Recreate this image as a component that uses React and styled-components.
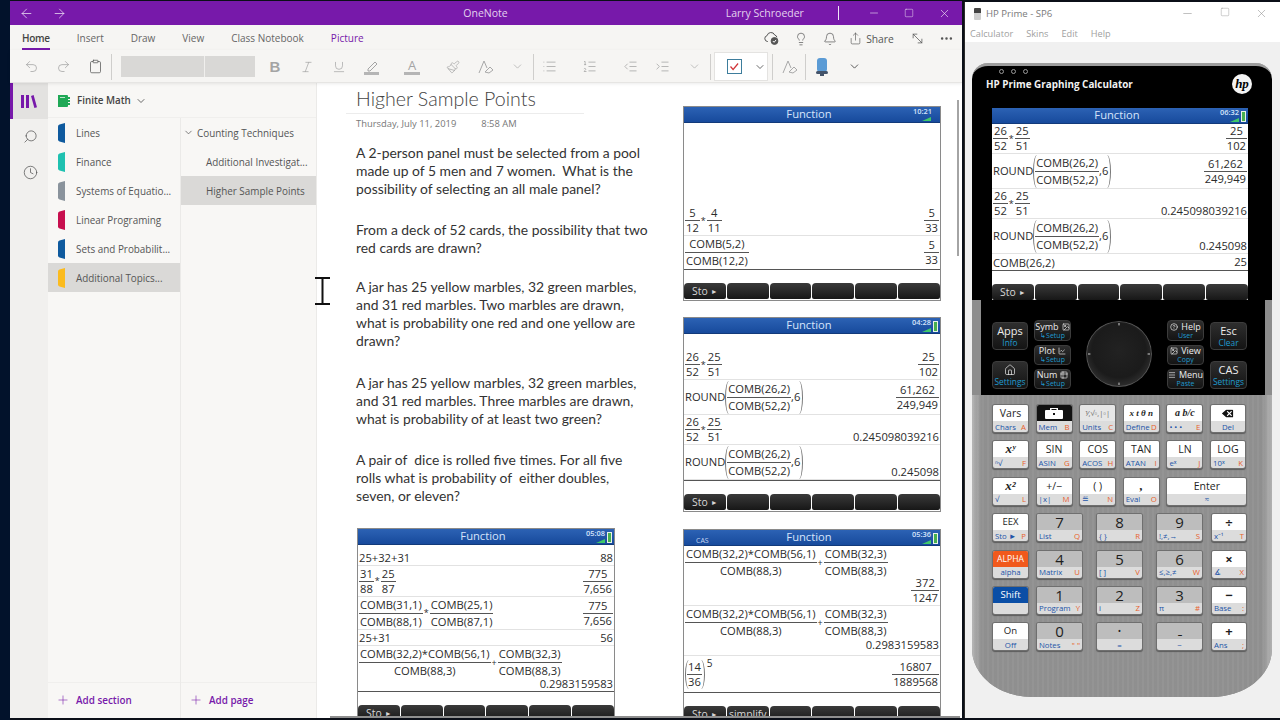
import styled, { createGlobalStyle } from 'styled-components'
import {
  ArrowLeft, ArrowRight, Undo2, Redo2, Clipboard, Italic, Underline, Paintbrush, ChevronDown,
  List, ListOrdered, IndentDecrease, IndentIncrease, Search, Clock, Lightbulb, Bell, Share,
  MoveDiagonal2, Ellipsis, Minus, Square, X, Plus, Home, ChartLine, Table2, CircleHelp, Menu, Image,
  Delete,
} from 'lucide-react'

const UI_FONT = '"Open Sans", "Noto Sans", sans-serif'
const NOTE_FONT = 'Lato, "Open Sans", sans-serif'
const PURPLE = '#7719AA'

const GlobalStyle = createGlobalStyle`
  * { box-sizing: border-box; margin: 0; padding: 0; }
  html, body { width: 100%; height: 100%; overflow: hidden; background: #02122b; }
  body { font-family: ${UI_FONT}; }
  #root { width: 1280px; height: 720px; }
`

const Desktop = styled.div`
  width: 1280px;
  height: 720px;
  padding: 1px 0 2px 10px;
  display: flex;
  background: linear-gradient(to right, #02122b 10px, #0b0f18 10px);
  position: relative;
  overflow: hidden;
`

/* ---------- OneNote window ---------- */

const NoteWindow = styled.div`
  width: 952px;
  display: flex;
  flex-direction: column;
  background: #fff;
`

const TitleBar = styled.div`
  height: 24px;
  flex: none;
  background: ${PURPLE};
  color: #e4d2ee;
  display: flex;
  align-items: center;
  font-size: 10.5px;
  position: relative;
`

const NavSlot = styled.div`
  width: 35px;
  display: flex;
  justify-content: center;
  color: #efe4f5;
`

const TitleName = styled.span`
  margin-left: ${(p) => p.$ml}px;
  white-space: nowrap;
`

const TitleDivider = styled.span`
  width: 1px;
  height: 14px;
  background: #f0e6f6;
  margin: 0 18px 0 34px;
`

const WinBtn = styled.div`
  width: 37px;
  display: flex;
  justify-content: center;
  color: #efe4f5;
`

const TabRow = styled.div`
  height: 25px;
  flex: none;
  background: #f6f5f3;
  display: flex;
  align-items: stretch;
  padding-left: 12px;
  gap: 27px;
  font-size: 10px;
  color: #666;
  position: relative;
`

const Tab = styled.div`
  display: flex;
  align-items: center;
  height: 25px;
  padding-top: 2px;
  color: ${(p) => (p.$purple ? PURPLE : p.$active ? '#444' : '#666')};
  font-weight: ${(p) => (p.$active ? 600 : 400)};
  letter-spacing: ${(p) => (p.$active ? '-0.3px' : '0')};
  border-bottom: 2px solid ${(p) => (p.$active ? PURPLE : 'transparent')};
`

const TabTools = styled.div`
  margin-left: auto;
  padding-top: 2px;
  display: flex;
  align-items: center;
  color: #555;
  font-size: 10.3px;
`

const TabTool = styled.div`
  width: ${(p) => p.$w}px;
  display: flex;
  align-items: center;
  justify-content: center;
  gap: 4px;
`

const Ribbon = styled.div`
  height: 33px;
  flex: none;
  background: #f6f5f3;
  border-bottom: 1px solid #e6e5e3;
  box-shadow: 0 1px 3px rgba(0, 0, 0, 0.08);
  display: flex;
  align-items: center;
  padding: 1px 0 0 5px;
  color: #a2a2a2;
  position: relative;
  z-index: 1;
`

const Slot = styled.div`
  width: ${(p) => p.$w || 32}px;
  flex: none;
  display: flex;
  align-items: center;
  justify-content: center;
  color: ${(p) => p.$color || 'inherit'};
`

const RibbonSep = styled.span`
  width: 1px;
  height: 26px;
  flex: none;
  background: #cfcecc;
`

const FontBox = styled.div`
  width: 134px;
  height: 21px;
  margin: 0 4px 0 9px;
  flex: none;
  background: linear-gradient(to right, #d9d8d6 83px, #f0efed 83px, #f0efed 84px, #d9d8d6 84px);
`

const CheckCell = styled.div`
  width: 54px;
  height: 29px;
  margin: 0 4px 0 3px;
  flex: none;
  background: #fff;
  border: 1px solid #e4e3e1;
  display: flex;
  align-items: center;
  color: #444;
`

const BarGlyph = styled.div`
  display: flex;
  flex-direction: column;
  align-items: center;
  font-size: 13px;
  line-height: 12px;
  color: #a4a4a4;
  &::after {
    content: '';
    width: 16px;
    height: 3px;
    margin-top: 1px;
    background: #b5b5b5;
  }
`

const BoldGlyph = styled.span`
  font: 700 15px "Liberation Sans", sans-serif;
  color: #a4a4a4;
`

const NoteBody = styled.div`
  flex: 1;
  min-height: 0;
  display: flex;
`

const Rail = styled.div`
  width: 38px;
  flex: none;
  background: #f1f0ee;
  color: #555;
  display: flex;
  flex-direction: column;
`

const RailItem = styled.div`
  height: ${(p) => p.$h}px;
  display: flex;
  align-items: center;
  justify-content: center;
  background: ${(p) => (p.$active ? '#e3e2e0' : 'transparent')};
  border-left: 3px solid ${(p) => (p.$active ? PURPLE : 'transparent')};
  padding-right: ${(p) => (p.$active ? 3 : 0)}px;
`

const MirrorSearch = styled(Search)`
  transform: scaleX(-1);
`

const NavPanel = styled.div`
  width: 269px;
  flex: none;
  display: flex;
  flex-direction: column;
  background: #f8f7f5;
  border-right: 1px solid #ebeae8;
`

const NotebookHead = styled.div`
  height: 35px;
  flex: none;
  display: flex;
  align-items: center;
  padding: 1px 0 0 9px;
  gap: 7px;
  font-size: 9.8px;
  font-weight: 600;
  color: #444;
  border-bottom: 1px solid #f0efed;
`

const HeadText = styled.span`
  margin-right: -3px;
`

const NavColumns = styled.div`
  flex: 1;
  min-height: 0;
  display: flex;
`

const NavCol = styled.div`
  width: ${(p) => p.$w}px;
  display: flex;
  flex-direction: column;
  border-right: ${(p) => (p.$divider ? '1px solid #ebeae8' : 'none')};
`

const NavItem = styled.div`
  height: 29px;
  flex: none;
  display: flex;
  align-items: center;
  padding-left: ${(p) => p.$pl}px;
  gap: ${(p) => p.$gap || 0}px;
  font-size: 9.9px;
  color: #555;
  white-space: nowrap;
  background: ${(p) => (p.$selected ? '#dad9d7' : 'transparent')};
`

const AddRow = styled.div`
  margin-top: auto;
  height: 36px;
  flex: none;
  display: flex;
  align-items: center;
  padding: 0 0 2px 8px;
  gap: 6px;
  font-size: 9.9px;
  font-weight: 600;
  color: ${PURPLE};
  border-top: 1px solid #f0efed;
`

const Page = styled.div`
  flex: 1;
  min-width: 0;
  padding-left: 39px;
  display: flex;
  background: #fff;
  overflow: hidden;
  position: relative;
`

const TextCol = styled.div`
  width: 327px;
  flex: none;
`

const NoteTitle = styled.div`
  width: 238px;
  height: 27px;
  margin: 4px 0 0 -10px;
  padding-left: 10px;
  border-bottom: 1px solid #ececec;
  font: 300 19.6px/24px ${NOTE_FONT};
  color: #444;
  white-space: nowrap;
`

const DateLine = styled.div`
  height: 14px;
  margin-top: 2px;
  font-size: 9.4px;
  line-height: 15px;
  color: #777;
  display: flex;
  gap: 25px;
`

const Para = styled.p`
  margin-top: ${(p) => p.$mt}px;
  font: 400 13.9px/18px ${NOTE_FONT};
  color: #333;
  white-space: pre;
`

const ShotLeft = styled.div`
  margin: 23px 0 0 1px;
`

const ShotCol = styled.div`
  padding-top: 23px;
  display: flex;
  flex-direction: column;
  gap: 16px;
  & > :last-child {
    margin-top: 1px;
  }
`

const ScrollV = styled.div`
  position: absolute;
  right: 3px;
  top: 17px;
  width: 2px;
  height: 156px;
  background: #a4a4a4;
`

const ScrollH = styled.div`
  position: absolute;
  left: 13px;
  right: 2px;
  bottom: 0;
  height: 2px;
  background: #8f8f8f;
`

const Caret = styled.svg`
  position: absolute;
  left: 315px;
  top: 277px;
`

/* ---------- HP Prime screen, used in the notes and in the emulator ---------- */

const Screen = styled.div`
  width: ${(p) => p.$w}px;
  height: ${(p) => p.$h}px;
  flex: none;
  display: flex;
  flex-direction: column;
  background: #fff;
  border: ${(p) => (p.$bare ? 'none' : '1px solid #8a8a8a')};
  color: #2c2c2c;
  font-family: "Open Sans", sans-serif;
  font-size: 11.2px;
  overflow: hidden;
`

const ScreenHead = styled.div`
  height: 16px;
  flex: none;
  padding-right: 6px;
  background: linear-gradient(#2c62b4, #174a9c);
  border-bottom: 1px solid #123a7a;
  color: #d6e4fb;
  font-size: 11.2px;
  line-height: 14px;
  text-align: center;
  position: relative;
`

const CasTag = styled.span`
  position: absolute;
  left: 12px;
  bottom: 0;
  font-size: 7px;
  line-height: 9px;
  color: #c6d6f2;
`

const ClockText = styled.span`
  position: absolute;
  right: ${(p) => (p.$batt ? 9 : 8)}px;
  top: 0;
  font-size: 7.4px;
  line-height: 8px;
  color: #d6e4fb;
  font-weight: 600;
`

const Signal = styled.span`
  position: absolute;
  right: 9px;
  bottom: 1px;
  width: 9px;
  height: 4px;
  background: #3fc86a;
  clip-path: polygon(0 100%, 100% 0, 100% 100%);
`

const Battery = styled.span`
  position: absolute;
  right: 2px;
  top: 3px;
  width: 5px;
  height: 11px;
  border: 1px solid #e8f2e8;
  background: #47b04f;
`

const ScreenRows = styled.div`
  flex: 1;
  min-height: 0;
  display: flex;
  flex-direction: column;
  justify-content: flex-end;
  border-bottom: 1px solid #555;
`

const Row = styled.div`
  height: ${(p) => p.$h}px;
  flex: none;
  padding: 0 1px;
  display: flex;
  justify-content: space-between;
  align-items: ${(p) => p.$align || 'center'};
  border-bottom: ${(p) => (p.$last ? 'none' : '1px solid #e2e2e2')};
  white-space: nowrap;
`

const LeftCell = styled.div`
  flex: 1 1 0;
  min-width: 0;
  display: flex;
`

const RightCell = styled.div`
  flex: none;
  line-height: 14px;
  align-self: ${(p) => p.$self || 'auto'};
  margin-bottom: ${(p) => p.$mb || 0}px;
`

const Expr = styled.div`
  display: inline-flex;
  align-items: center;
  line-height: 14px;
`

const FracBox = styled.div`
  display: inline-flex;
  flex-direction: column;
  align-items: center;
  text-align: center;
  line-height: ${(p) => (p.$tall ? 16 : 14)}px;
`

const FracTop = styled.span`
  padding: 0 1px;
  width: 100%;
  border-bottom: 1px solid #555;
`

const FracBot = styled.span`
  padding: 0 1px;
`

const Times = styled.span`
  margin: 0 1px;
  font-size: 9px;
`

const Sup = styled.span`
  align-self: flex-start;
  margin: -4px 0 0 2px;
  font-size: 10px;
`

const Parens = styled.div`
  display: inline-flex;
  align-items: center;
  padding: 0 2px 0 1px;
  border-left: 1px solid #777;
  border-right: 1px solid #777;
  border-radius: 4px / 50%;
`

const SoftKeys = styled.div`
  height: 16px;
  flex: none;
  margin: 13px 0 1px;
  display: grid;
  grid-template-columns: repeat(6, 1fr);
  gap: 1px;
  background: #fff;
`

const SoftKey = styled.div`
  background: linear-gradient(#3a3a3a, #171717);
  border-radius: 4px 4px 2px 2px;
  color: #d7d7d7;
  font-size: 10.4px;
  line-height: 16px;
  text-align: center;
  overflow: hidden;
`

const SoftArrow = styled.span`
  font-size: 7px;
  margin-left: 3px;
  vertical-align: 1px;
`

const Frac = ({ n, d, tall }) => (
  <FracBox $tall={tall}>
    <FracTop>{n}</FracTop>
    <FracBot>{d}</FracBot>
  </FracBox>
)

const frac2652 = (
  <Expr>
    <Frac n="26" d="52" />
    <Times>*</Times>
    <Frac n="25" d="51" />
  </Expr>
)

const round = (
  <Expr>
    ROUND
    <Parens>
      <Frac tall n="COMB(26,2)" d="COMB(52,2)" />
      ,6
    </Parens>
  </Expr>
)

const sumComb = (
  <Expr>
    <Frac tall n="COMB(32,2)*COMB(56,1)" d="COMB(88,3)" />
    <Times>+</Times>
    <Frac tall n="COMB(32,3)" d="COMB(88,3)" />
  </Expr>
)

const roundRows = [
  { h: 30, left: frac2652, right: <Frac n="25" d="102" /> },
  { h: 35, left: round, right: <Frac n="61,262" d="249,949" /> },
  { h: 30, left: frac2652, right: '0.245098039216', self: 'flex-end' },
  { h: 35, left: round, right: '0.245098', self: 'flex-end' },
]

const SHOTS = {
  first: {
    time: '10:21',
    rows: [
      {
        h: 30,
        left: (
          <Expr>
            <Frac n="5" d="12" />
            <Times>*</Times>
            <Frac n="4" d="11" />
          </Expr>
        ),
        right: <Frac n="5" d="33" />,
      },
      { h: 33, left: <Frac tall n="COMB(5,2)" d="COMB(12,2)" />, right: <Frac n="5" d="33" />, last: true },
    ],
  },
  second: { time: '04:28', batt: true, rows: roundRows },
  third: {
    time: '05:08',
    batt: true,
    rows: [
      { h: 21, align: 'flex-end', left: '25+32+31', right: '88' },
      {
        h: 31,
        left: (
          <Expr>
            <Frac n="31" d="88" />
            <Times>*</Times>
            <Frac n="25" d="87" />
          </Expr>
        ),
        right: <Frac n="775" d="7,656" />,
      },
      {
        h: 33,
        left: (
          <Expr>
            <Frac tall n="COMB(31,1)" d="COMB(88,1)" />
            <Times>*</Times>
            <Frac tall n="COMB(25,1)" d="COMB(87,1)" />
          </Expr>
        ),
        right: <Frac n="775" d="7,656" />,
      },
      { h: 16, align: 'flex-end', left: '25+31', right: '56' },
      { h: 45, align: 'flex-start', left: sumComb, right: '0.2983159583', self: 'flex-end', last: true },
    ],
  },
  fourth: {
    time: '05:36',
    batt: true,
    cas: true,
    keys: ['Sto', 'simplify'],
    rows: [
      { h: 60, align: 'flex-start', left: sumComb, right: <Frac n="372" d="1247" />, self: 'flex-end' },
      { h: 50, align: 'flex-start', left: sumComb, right: '0.2983159583', self: 'flex-end', mb: 3 },
      {
        h: 36,
        left: (
          <Expr>
            <Parens>
              <Frac n="14" d="36" />
            </Parens>
            <Sup>5</Sup>
          </Expr>
        ),
        right: <Frac n="16807" d="1889568" />,
        last: true,
      },
    ],
  },
  emulator: {
    time: '06:32',
    batt: true,
    rows: [...roundRows, { h: 16, left: 'COMB(26,2)', right: '25', last: true }],
  },
}

function PrimeScreen({ shot, w = 258, h = 195, bare }) {
  const keys = shot.keys || ['Sto']
  return (
    <Screen $w={w} $h={h} $bare={bare}>
      <ScreenHead>
        {shot.cas && <CasTag>CAS</CasTag>}
        Function
        <ClockText $batt={shot.batt}>{shot.time}</ClockText>
        <Signal />
        {shot.batt && <Battery />}
      </ScreenHead>
      <ScreenRows>
        {shot.rows.map((r, i) => (
          <Row key={i} $h={r.h} $align={r.align} $last={r.last}>
            <LeftCell>{r.left}</LeftCell>
            <RightCell $self={r.self} $mb={r.mb}>{r.right}</RightCell>
          </Row>
        ))}
      </ScreenRows>
      <SoftKeys>
        {[0, 1, 2, 3, 4, 5].map((i) => (
          <SoftKey key={i}>
            {keys[i]}
            {keys[i] === 'Sto' && <SoftArrow>►</SoftArrow>}
          </SoftKey>
        ))}
      </SoftKeys>
    </Screen>
  )
}

/* ---------- HP Prime emulator window ---------- */

const CalcWindow = styled.div`
  width: 316px;
  margin-left: 2px;
  margin-top: 1px;
  flex: none;
  display: flex;
  flex-direction: column;
  background: #f0f0f0;
  border-left: 1px solid #2b2b2b;
`

const CalcTitle = styled.div`
  height: 23px;
  flex: none;
  background: #fff;
  display: flex;
  align-items: center;
  padding-left: 9px;
  gap: 5px;
  font-size: 9.6px;
  color: #7a7a7a;
`

const AppGlyph = styled.span`
  width: 7px;
  height: 12px;
  border-radius: 1px;
  background: linear-gradient(#444 45%, #cfcfcf 45%);
`

const CalcControls = styled.div`
  margin-left: auto;
  display: flex;
  color: #8c8c8c;
`

const CalcCtl = styled.div`
  width: 37px;
  display: flex;
  justify-content: center;
`

const CalcMenu = styled.div`
  height: 17px;
  flex: none;
  background: #fff;
  display: flex;
  align-items: center;
  padding-left: 5px;
  gap: 13px;
  font-size: 9.2px;
  color: #a0a0a0;
`

const Shell = styled.div`
  width: 300px;
  margin: 21px 0 0 7px;
  height: 634px;
  flex: none;
  display: flex;
  flex-direction: column;
  border-radius: 16px 16px 60px 60px / 16px 16px 48px 48px;
  overflow: hidden;
  background: #8d8d8d;
  box-shadow: inset 0 2px 0 #b9b9b9;
`

const ShellTop = styled.div`
  height: 237px;
  flex: none;
  padding: 0 20px;
  background: #000;
  border-radius: 16px 16px 0 0;
  border-top: 3px solid #9d9d9d;
  display: flex;
  flex-direction: column;
`

const BrandRow = styled.div`
  height: 42px;
  flex: none;
  display: flex;
  align-items: flex-start;
  justify-content: space-between;
  padding-top: 3px;
`

const BrandText = styled.div`
  display: flex;
  flex-direction: column;
  gap: 3px;
  margin-left: -6px;
  color: #f2f2f2;
  font-size: 9.9px;
  font-weight: 700;
`

const Dots = styled.div`
  display: flex;
  gap: 7px;
  margin-left: 13px;
`

const Dot = styled.span`
  width: 5px;
  height: 5px;
  border-radius: 50%;
  border: 1px solid #999;
`

const HpBadge = styled.div`
  width: 20px;
  height: 20px;
  margin: 5px 0 0 0;
  border-radius: 50%;
  background: #f4f4f4;
  color: #000;
  font: italic 700 13px/19px "Liberation Serif", serif;
  text-align: center;
`

const ShellMid = styled.div`
  height: 95px;
  flex: none;
  padding: 20px 18px 6px 11px;
  background: #000;
  border-left: 9px solid #8d8d8d;
  border-right: 7px solid #8d8d8d;
  display: flex;
  justify-content: space-between;
`

const KeyCluster = styled.div`
  display: flex;
  gap: 6px;
`

const KeyStack = styled.div`
  display: flex;
  flex-direction: column;
  justify-content: space-between;
  padding-top: ${(p) => p.$pt || 0}px;
  width: ${(p) => p.$w}px;
`

const DarkKey = styled.div`
  height: ${(p) => p.$h}px;
  border: 1px solid #3c3c3c;
  border-radius: 4px;
  background: linear-gradient(#2e2e2e, #141414);
  display: flex;
  flex-direction: column;
  align-items: center;
  justify-content: center;
  color: #ececec;
  font-size: ${(p) => (p.$small ? 9 : 11)}px;
  line-height: ${(p) => (p.$small ? 10 : 13)}px;
`

const DarkSub = styled.span`
  color: #1f9bd0;
  font-size: ${(p) => (p.$small ? 7 : 8.4)}px;
  line-height: ${(p) => (p.$small ? 8 : 11)}px;
`

const DarkLabel = styled.span`
  display: flex;
  align-items: center;
  gap: 3px;
`

const Dial = styled.div`
  width: 66px;
  height: 66px;
  margin-top: 1px;
  border-radius: 50%;
  background:
    radial-gradient(circle at 50% 5%, #777 0 1px, transparent 1.5px),
    radial-gradient(circle at 50% 95%, #777 0 1px, transparent 1.5px),
    radial-gradient(circle at 5% 50%, #777 0 1px, transparent 1.5px),
    radial-gradient(circle at 95% 50%, #777 0 1px, transparent 1.5px),
    radial-gradient(circle at 50% 45%, #222 0, #1b1b1b 55%, #4a4a4a 100%);
  box-shadow: inset 0 0 0 1px #555;
`

const Metal = styled.div`
  flex: 1;
  padding: 10px 20px 0 21px;
  background:
    repeating-linear-gradient(90deg, rgba(255, 255, 255, 0.02) 0 2px, rgba(0, 0, 0, 0.02) 2px 5px),
    linear-gradient(to right, #b4b4b4 0, #929292 10px, #929292 290px, #b4b4b4 100%);
`

const KeyGrid = styled.div`
  display: grid;
  grid-template-columns: ${(p) => p.$cols};
  grid-auto-rows: 27px;
  row-gap: 9.4px;
  margin-bottom: 9.4px;
`

const KeyCap = styled.div`
  width: ${(p) => p.$w}px;
  grid-column: span ${(p) => p.$span || 1};
  height: 27px;
  border-radius: 2px;
  overflow: hidden;
  display: flex;
  flex-direction: column;
  box-shadow: 0 0 0 1px #6f6f6f, 0 1px 1px 1px #5c5c5c;
  background: #dcdcdc;
`

const KeyFace = styled.div`
  height: 16px;
  flex: none;
  display: flex;
  align-items: center;
  justify-content: center;
  background: ${(p) => p.$bg || '#fff'};
  color: ${(p) => p.$fg || '#1e1e1e'};
  font-size: ${(p) => p.$size || 10.5}px;
  line-height: 16px;
  font-family: ${(p) => (p.$serif ? '"Liberation Serif", serif' : 'inherit')};
  font-style: ${(p) => (p.$serif ? 'italic' : 'normal')};
  font-weight: ${(p) => (p.$serif || p.$strong ? 700 : 400)};
  white-space: nowrap;
`

const KeyFoot = styled.div`
  flex: 1;
  min-height: 0;
  padding: 0 2px;
  display: flex;
  align-items: center;
  justify-content: ${(p) => (p.$center ? 'center' : 'space-between')};
  color: #2254a8;
  font-size: 7.8px;
  line-height: 10px;
  font-weight: 500;
  white-space: nowrap;
`

const Orange = styled.span`
  color: #e8622c;
`

const GRAY = { bg: '#bdbdbd', size: 15 }
const SMALL_OPS = { size: 13, strong: true }

const upperKeys = [
  { id: 'vars', label: 'Vars', blue: 'Chars', orange: 'A', w: 35 },
  { id: 'mem', tool: true, blue: 'Mem', orange: 'B', w: 35, bg: '#111' },
  { id: 'units', label: '⅟,√▫,|▫|', blue: 'Units', orange: 'C', w: 35, size: 7.5, bg: '#e6e6e6', fg: '#666' },
  { id: 'xt', label: 'x t θ n', blue: 'Define', orange: 'D', w: 35, serif: true, size: 9 },
  { id: 'abc', label: 'a b/c', blue: '• • •', orange: 'E', w: 35, serif: true, size: 10 },
  { id: 'del', del: true, blue: 'Del', center: true, w: 34 },
  { id: 'pow', label: 'xʸ', blue: 'ⁿ√', orange: 'F', w: 35, serif: true, size: 13 },
  { id: 'sin', label: 'SIN', blue: 'ASIN', orange: 'G', w: 35 },
  { id: 'cos', label: 'COS', blue: 'ACOS', orange: 'H', w: 35 },
  { id: 'tan', label: 'TAN', blue: 'ATAN', orange: 'I', w: 35 },
  { id: 'ln', label: 'LN', blue: 'eˣ', orange: 'J', w: 35 },
  { id: 'log', label: 'LOG', blue: '10ˣ', orange: 'K', w: 34 },
  { id: 'sq', label: 'x²', blue: '√', orange: 'L', w: 35, serif: true, size: 13 },
  { id: 'neg', label: '+/−', blue: '|x|', orange: 'M', w: 35 },
  { id: 'par', label: '( )', blue: '≝', orange: 'N', w: 35 },
  { id: 'com', label: ',', blue: 'Eval', orange: 'O', w: 35, size: 13, serif: true },
  { id: 'ent', label: 'Enter', blue: '≈', center: true, w: 79, span: 2 },
]

const lowerKeys = [
  { id: 'eex', label: 'EEX', blue: 'Sto ►', orange: 'P', w: 35, size: 9.5 },
  { ...GRAY, id: '7', label: '7', blue: 'List', orange: 'Q', w: 45 },
  { ...GRAY, id: '8', label: '8', blue: '{ }', orange: 'R', w: 45 },
  { ...GRAY, id: '9', label: '9', blue: '!,≠,→', orange: 'S', w: 45 },
  { ...SMALL_OPS, id: 'div', label: '÷', blue: 'x⁻¹', orange: 'T', w: 34 },
  { id: 'alpha', label: 'ALPHA', blue: 'alpha', center: true, w: 35, bg: '#f1591c', fg: '#fff', size: 8.6 },
  { ...GRAY, id: '4', label: '4', blue: 'Matrix', orange: 'U', w: 45 },
  { ...GRAY, id: '5', label: '5', blue: '[ ]', orange: 'V', w: 45 },
  { ...GRAY, id: '6', label: '6', blue: '≤,≥,≠', orange: 'W', w: 45 },
  { ...SMALL_OPS, id: 'mul', label: '×', blue: '∡', orange: 'X', w: 34 },
  { id: 'shift', label: 'Shift', center: true, w: 35, bg: '#0a4ea6', fg: '#fff', size: 9.6 },
  { ...GRAY, id: '1', label: '1', blue: 'Program', orange: 'Y', w: 45 },
  { ...GRAY, id: '2', label: '2', blue: 'i', orange: 'Z', w: 45 },
  { ...GRAY, id: '3', label: '3', blue: 'π', orange: '#', w: 45 },
  { ...SMALL_OPS, id: 'sub', label: '−', blue: 'Base', orange: ':', w: 34 },
  { id: 'on', label: 'On', blue: 'Off', center: true, w: 35, size: 9.6 },
  { ...GRAY, id: '0', label: '0', blue: 'Notes', orange: '" "', w: 45 },
  { ...GRAY, id: 'dot', label: '•', blue: '=', center: true, w: 45, size: 9 },
  { ...GRAY, id: 'spc', label: '⎵', blue: '−', center: true, w: 45, size: 10 },
  { ...SMALL_OPS, id: 'add', label: '+', blue: 'Ans', orange: ';', w: 34 },
]

const ToolboxIcon = () => (
  <svg width="20" height="12" viewBox="0 0 20 12" fill="#fff">
    <rect x="1" y="3" width="18" height="9" rx="1" />
    <path d="M6 3V1h8v2h-1.5V2h-5v1z" />
    <rect x="9" y="6" width="2" height="2" fill="#111" />
  </svg>
)

function Key({ k }) {
  return (
    <KeyCap $w={k.w} $span={k.span}>
      <KeyFace $bg={k.bg} $fg={k.fg} $size={k.size} $serif={k.serif} $strong={k.strong}>
        {k.del && <Delete size={15} fill="#111" color="#fff" strokeWidth={2} />}
        {k.tool && <ToolboxIcon />}
        {k.label}
      </KeyFace>
      <KeyFoot $center={k.center}>
        <span>{k.blue}</span>
        {k.orange && <Orange>{k.orange}</Orange>}
      </KeyFoot>
    </KeyCap>
  )
}

const LibraryIcon = () => (
  <svg width="16" height="13" viewBox="0 0 16 13" fill={PURPLE}>
    <rect x="0" y="0" width="3" height="13" />
    <rect x="5" y="0" width="3" height="13" />
    <path d="M10 1l2.6-1L16 12.2l-2.6.8z" />
  </svg>
)

const NotebookIcon = () => (
  <svg width="13" height="12" viewBox="0 0 13 12">
    <path d="M1 0h9a1 1 0 011 1v10a1 1 0 01-1 1H1z" fill="#1fa855" />
    <rect x="11" y="2" width="2" height="2" fill="#1fa855" />
    <rect x="11" y="5" width="2" height="2" fill="#1fa855" />
    <rect x="11" y="8" width="2" height="2" fill="#1fa855" />
    <rect x="3" y="2" width="5" height="1" fill="#fff" opacity="0.7" />
  </svg>
)

const SectionTab = ({ color }) => (
  <svg width="7" height="20" viewBox="0 0 7 20">
    <path d="M0 3.5Q0 2 1.5 1.5L7 0V20L1.5 18.5Q0 18 0 16.5z" fill={color} />
  </svg>
)

const CloudCheck = () => (
  <svg width="15" height="13" viewBox="0 0 15 13" fill="none" stroke="#555" strokeWidth="1">
    <path d="M4 9.5H3.5a3 3 0 01-.4-5.9 4 4 0 017.6-.6 3 3 0 012.2 2.2" />
    <circle cx="10.5" cy="9" r="3.4" fill="#555" />
    <path d="M8.8 9l1.3 1.3 2-2.4" stroke="#fff" />
  </svg>
)

const HighlightIcon = () => (
  <svg width="17" height="16" viewBox="0 0 17 16" fill="none" stroke="#a4a4a4" strokeWidth="1">
    <path d="M5 10l7-7 2 2-7 7H5z" />
    <rect x="1" y="13" width="15" height="3" fill="#b5b5b5" stroke="none" />
  </svg>
)

const StyleA = () => (
  <svg width="17" height="16" viewBox="0 0 17 16" fill="none" stroke="#a8a8a8" strokeWidth="1">
    <path d="M2 14L7 2l3 7" />
    <path d="M8 13l5-5 3 3-4 3z" />
  </svg>
)

const CheckBoxIcon = () => (
  <svg width="15" height="15" viewBox="0 0 15 15" fill="none">
    <rect x="0.5" y="0.5" width="14" height="14" stroke="#3d7d9c" />
    <path d="M3.5 7.5l2.6 3 5-6" stroke="#d13438" strokeWidth="1.2" />
  </svg>
)

const MicIcon = () => (
  <svg width="12" height="18" viewBox="0 0 12 18">
    <rect x="1" y="0" width="10" height="14" rx="3" fill="#5b9bd5" />
    <rect x="0" y="13" width="12" height="3" rx="1.5" fill="#44546a" />
    <rect x="4" y="16" width="4" height="2" fill="#44546a" />
  </svg>
)

const sections = [
  { name: 'Lines', color: '#0f5a9e' },
  { name: 'Finance', color: '#1fc1b0' },
  { name: 'Systems of Equatio...', color: '#8a939c' },
  { name: 'Linear Programing', color: '#c70f4e' },
  { name: 'Sets and Probabilit...', color: '#0f5a9e' },
  { name: 'Additional Topics...', color: '#fbbb1e', selected: true },
]

const IC = { strokeWidth: 1.2 }

function App() {
  return (
    <>
      <GlobalStyle />
      <Desktop>
        <NoteWindow>
          <TitleBar>
            <NavSlot><ArrowLeft size={15} {...IC} /></NavSlot>
            <NavSlot><ArrowRight size={15} {...IC} /></NavSlot>
            <TitleName $ml={387}>OneNote</TitleName>
            <TitleName $ml={218}>Larry Schroeder</TitleName>
            <TitleDivider />
            <WinBtn><Minus size={12} {...IC} /></WinBtn>
            <WinBtn><Square size={10} {...IC} /></WinBtn>
            <WinBtn><X size={13} {...IC} /></WinBtn>
          </TitleBar>

          <TabRow>
            <Tab $active>Home</Tab>
            <Tab>Insert</Tab>
            <Tab>Draw</Tab>
            <Tab>View</Tab>
            <Tab>Class Notebook</Tab>
            <Tab $purple>Picture</Tab>
            <TabTools>
              <TabTool $w={29}><CloudCheck /></TabTool>
              <TabTool $w={29}><Lightbulb size={14} {...IC} /></TabTool>
              <TabTool $w={29}><Bell size={14} {...IC} /></TabTool>
              <TabTool $w={55}><Share size={13} {...IC} />Share</TabTool>
              <TabTool $w={36}><MoveDiagonal2 size={15} {...IC} /></TabTool>
              <TabTool $w={22}><Ellipsis size={15} /></TabTool>
              <TabTool $w={5} />
            </TabTools>
          </TabRow>

          <Ribbon>
            <Slot><Undo2 size={15} {...IC} /></Slot>
            <Slot><Redo2 size={15} {...IC} /></Slot>
            <Slot $color="#555"><Clipboard size={15} {...IC} /></Slot>
            <RibbonSep />
            <FontBox />
            <Slot><BoldGlyph>B</BoldGlyph></Slot>
            <Slot><Italic size={14} {...IC} /></Slot>
            <Slot><Underline size={14} {...IC} /></Slot>
            <Slot><HighlightIcon /></Slot>
            <Slot $w={50}><BarGlyph>A</BarGlyph></Slot>
            <Slot><Paintbrush size={14} {...IC} /></Slot>
            <Slot><StyleA /></Slot>
            <Slot><ChevronDown size={13} {...IC} /></Slot>
            <RibbonSep />
            <Slot $w={30}><List size={15} {...IC} /></Slot>
            <Slot $w={50}><ListOrdered size={15} {...IC} /></Slot>
            <Slot><IndentDecrease size={15} {...IC} /></Slot>
            <Slot><IndentIncrease size={15} {...IC} /></Slot>
            <Slot><ChevronDown size={13} {...IC} /></Slot>
            <RibbonSep />
            <CheckCell>
              <Slot $w={39}><CheckBoxIcon /></Slot>
              <ChevronDown size={12} strokeWidth={1.6} />
            </CheckCell>
            <RibbonSep />
            <Slot><StyleA /></Slot>
            <RibbonSep />
            <Slot><MicIcon /></Slot>
            <Slot $color="#444"><ChevronDown size={13} strokeWidth={1.6} /></Slot>
          </Ribbon>

          <NoteBody>
            <Rail>
              <RailItem $h={36} $active><LibraryIcon /></RailItem>
              <RailItem $h={35}><MirrorSearch size={15} {...IC} /></RailItem>
              <RailItem $h={37}><Clock size={15} {...IC} /></RailItem>
            </Rail>

            <NavPanel>
              <NotebookHead>
                <NotebookIcon />
                <HeadText>Finite Math</HeadText>
                <ChevronDown size={12} strokeWidth={1.6} />
              </NotebookHead>
              <NavColumns>
                <NavCol $w={133} $divider>
                  {sections.map((s) => (
                    <NavItem key={s.name} $pl={10} $gap={11} $selected={s.selected}>
                      <SectionTab color={s.color} />
                      {s.name}
                    </NavItem>
                  ))}
                  <AddRow><Plus size={14} strokeWidth={1} />Add section</AddRow>
                </NavCol>
                <NavCol $w={135}>
                  <NavItem $pl={2} $gap={3}>
                    <ChevronDown size={11} strokeWidth={1.6} />
                    Counting Techniques
                  </NavItem>
                  <NavItem $pl={25}>Additional Investigat...</NavItem>
                  <NavItem $pl={25} $selected>Higher Sample Points</NavItem>
                  <AddRow><Plus size={14} strokeWidth={1} />Add page</AddRow>
                </NavCol>
              </NavColumns>
            </NavPanel>

            <Page>
              <TextCol>
                <NoteTitle>Higher Sample Points</NoteTitle>
                <DateLine>
                  <span>Thursday, July 11, 2019</span>
                  <span>8:58 AM</span>
                </DateLine>
                <Para $mt={14}>
                  {'A 2-person panel must be selected from a pool\nmade up of 5 men and 7 women.  What is the\npossibility of selecting an all male panel?'}
                </Para>
                <Para $mt={23}>
                  {'From a deck of 52 cards, the possibility that two\nred cards are drawn?'}
                </Para>
                <Para $mt={21}>
                  {'A jar has 25 yellow marbles, 32 green marbles,\nand 31 red marbles. Two marbles are drawn,\nwhat is probability one red and one yellow are\ndrawn?'}
                </Para>
                <Para $mt={24}>
                  {'A jar has 25 yellow marbles, 32 green marbles,\nand 31 red marbles. Three marbles are drawn,\nwhat is probability of at least two green?'}
                </Para>
                <Para $mt={23}>
                  {'A pair of  dice is rolled five times. For all five\nrolls what is probability of  either doubles,\nseven, or eleven?'}
                </Para>
                <ShotLeft>
                  <PrimeScreen shot={SHOTS.third} />
                </ShotLeft>
              </TextCol>
              <ShotCol>
                <PrimeScreen shot={SHOTS.first} />
                <PrimeScreen shot={SHOTS.second} />
                <PrimeScreen shot={SHOTS.fourth} />
              </ShotCol>
              <ScrollV />
              <ScrollH />
            </Page>
          </NoteBody>
        </NoteWindow>

        <CalcWindow>
          <CalcTitle>
            <AppGlyph />
            HP Prime - SP6
            <CalcControls>
              <CalcCtl><Minus size={13} strokeWidth={1} /></CalcCtl>
              <CalcCtl><Square size={10} strokeWidth={1} /></CalcCtl>
              <CalcCtl><X size={13} strokeWidth={1} /></CalcCtl>
            </CalcControls>
          </CalcTitle>
          <CalcMenu>
            <span>Calculator</span>
            <span>Skins</span>
            <span>Edit</span>
            <span>Help</span>
          </CalcMenu>
          <Shell>
            <ShellTop>
              <BrandRow>
                <BrandText>
                  <Dots><Dot /><Dot /><Dot /></Dots>
                  HP Prime Graphing Calculator
                </BrandText>
                <HpBadge>hp</HpBadge>
              </BrandRow>
              <PrimeScreen shot={SHOTS.emulator} w={256} h={193} bare />
            </ShellTop>
            <ShellMid>
              <KeyCluster>
                <KeyStack $w={36} $pt={2}>
                  <DarkKey $h={28}>Apps<DarkSub>Info</DarkSub></DarkKey>
                  <DarkKey $h={28}><Home size={12} strokeWidth={1.4} /><DarkSub>Settings</DarkSub></DarkKey>
                </KeyStack>
                <KeyStack $w={37}>
                  <DarkKey $h={21} $small>
                    <DarkLabel>Symb<Image size={8} /></DarkLabel>
                    <DarkSub $small>↳Setup</DarkSub>
                  </DarkKey>
                  <DarkKey $h={20} $small>
                    <DarkLabel>Plot<ChartLine size={8} /></DarkLabel>
                    <DarkSub $small>↳Setup</DarkSub>
                  </DarkKey>
                  <DarkKey $h={20} $small>
                    <DarkLabel>Num<Table2 size={8} /></DarkLabel>
                    <DarkSub $small>↳Setup</DarkSub>
                  </DarkKey>
                </KeyStack>
              </KeyCluster>
              <Dial />
              <KeyCluster>
                <KeyStack $w={37}>
                  <DarkKey $h={21} $small>
                    <DarkLabel><CircleHelp size={8} />Help</DarkLabel>
                    <DarkSub $small>User</DarkSub>
                  </DarkKey>
                  <DarkKey $h={20} $small>
                    <DarkLabel><Image size={8} />View</DarkLabel>
                    <DarkSub $small>Copy</DarkSub>
                  </DarkKey>
                  <DarkKey $h={20} $small>
                    <DarkLabel><Menu size={8} />Menu</DarkLabel>
                    <DarkSub $small>Paste</DarkSub>
                  </DarkKey>
                </KeyStack>
                <KeyStack $w={37} $pt={2}>
                  <DarkKey $h={28}>Esc<DarkSub>Clear</DarkSub></DarkKey>
                  <DarkKey $h={28}>CAS<DarkSub>Settings</DarkSub></DarkKey>
                </KeyStack>
              </KeyCluster>
            </ShellMid>
            <Metal>
              <KeyGrid $cols="repeat(6, 43.6px)">
                {upperKeys.map((k) => <Key key={k.id} k={k} />)}
              </KeyGrid>
              <KeyGrid $cols="44px 60px 60px 55px 34px">
                {lowerKeys.map((k) => <Key key={k.id} k={k} />)}
              </KeyGrid>
            </Metal>
          </Shell>
        </CalcWindow>

        <Caret width="15" height="28" viewBox="0 0 15 28" fill="none" stroke="#111" strokeWidth="2">
          <path d="M0 1h15M7.5 1v26M0 27h15" />
        </Caret>
      </Desktop>
    </>
  )
}

export default App
